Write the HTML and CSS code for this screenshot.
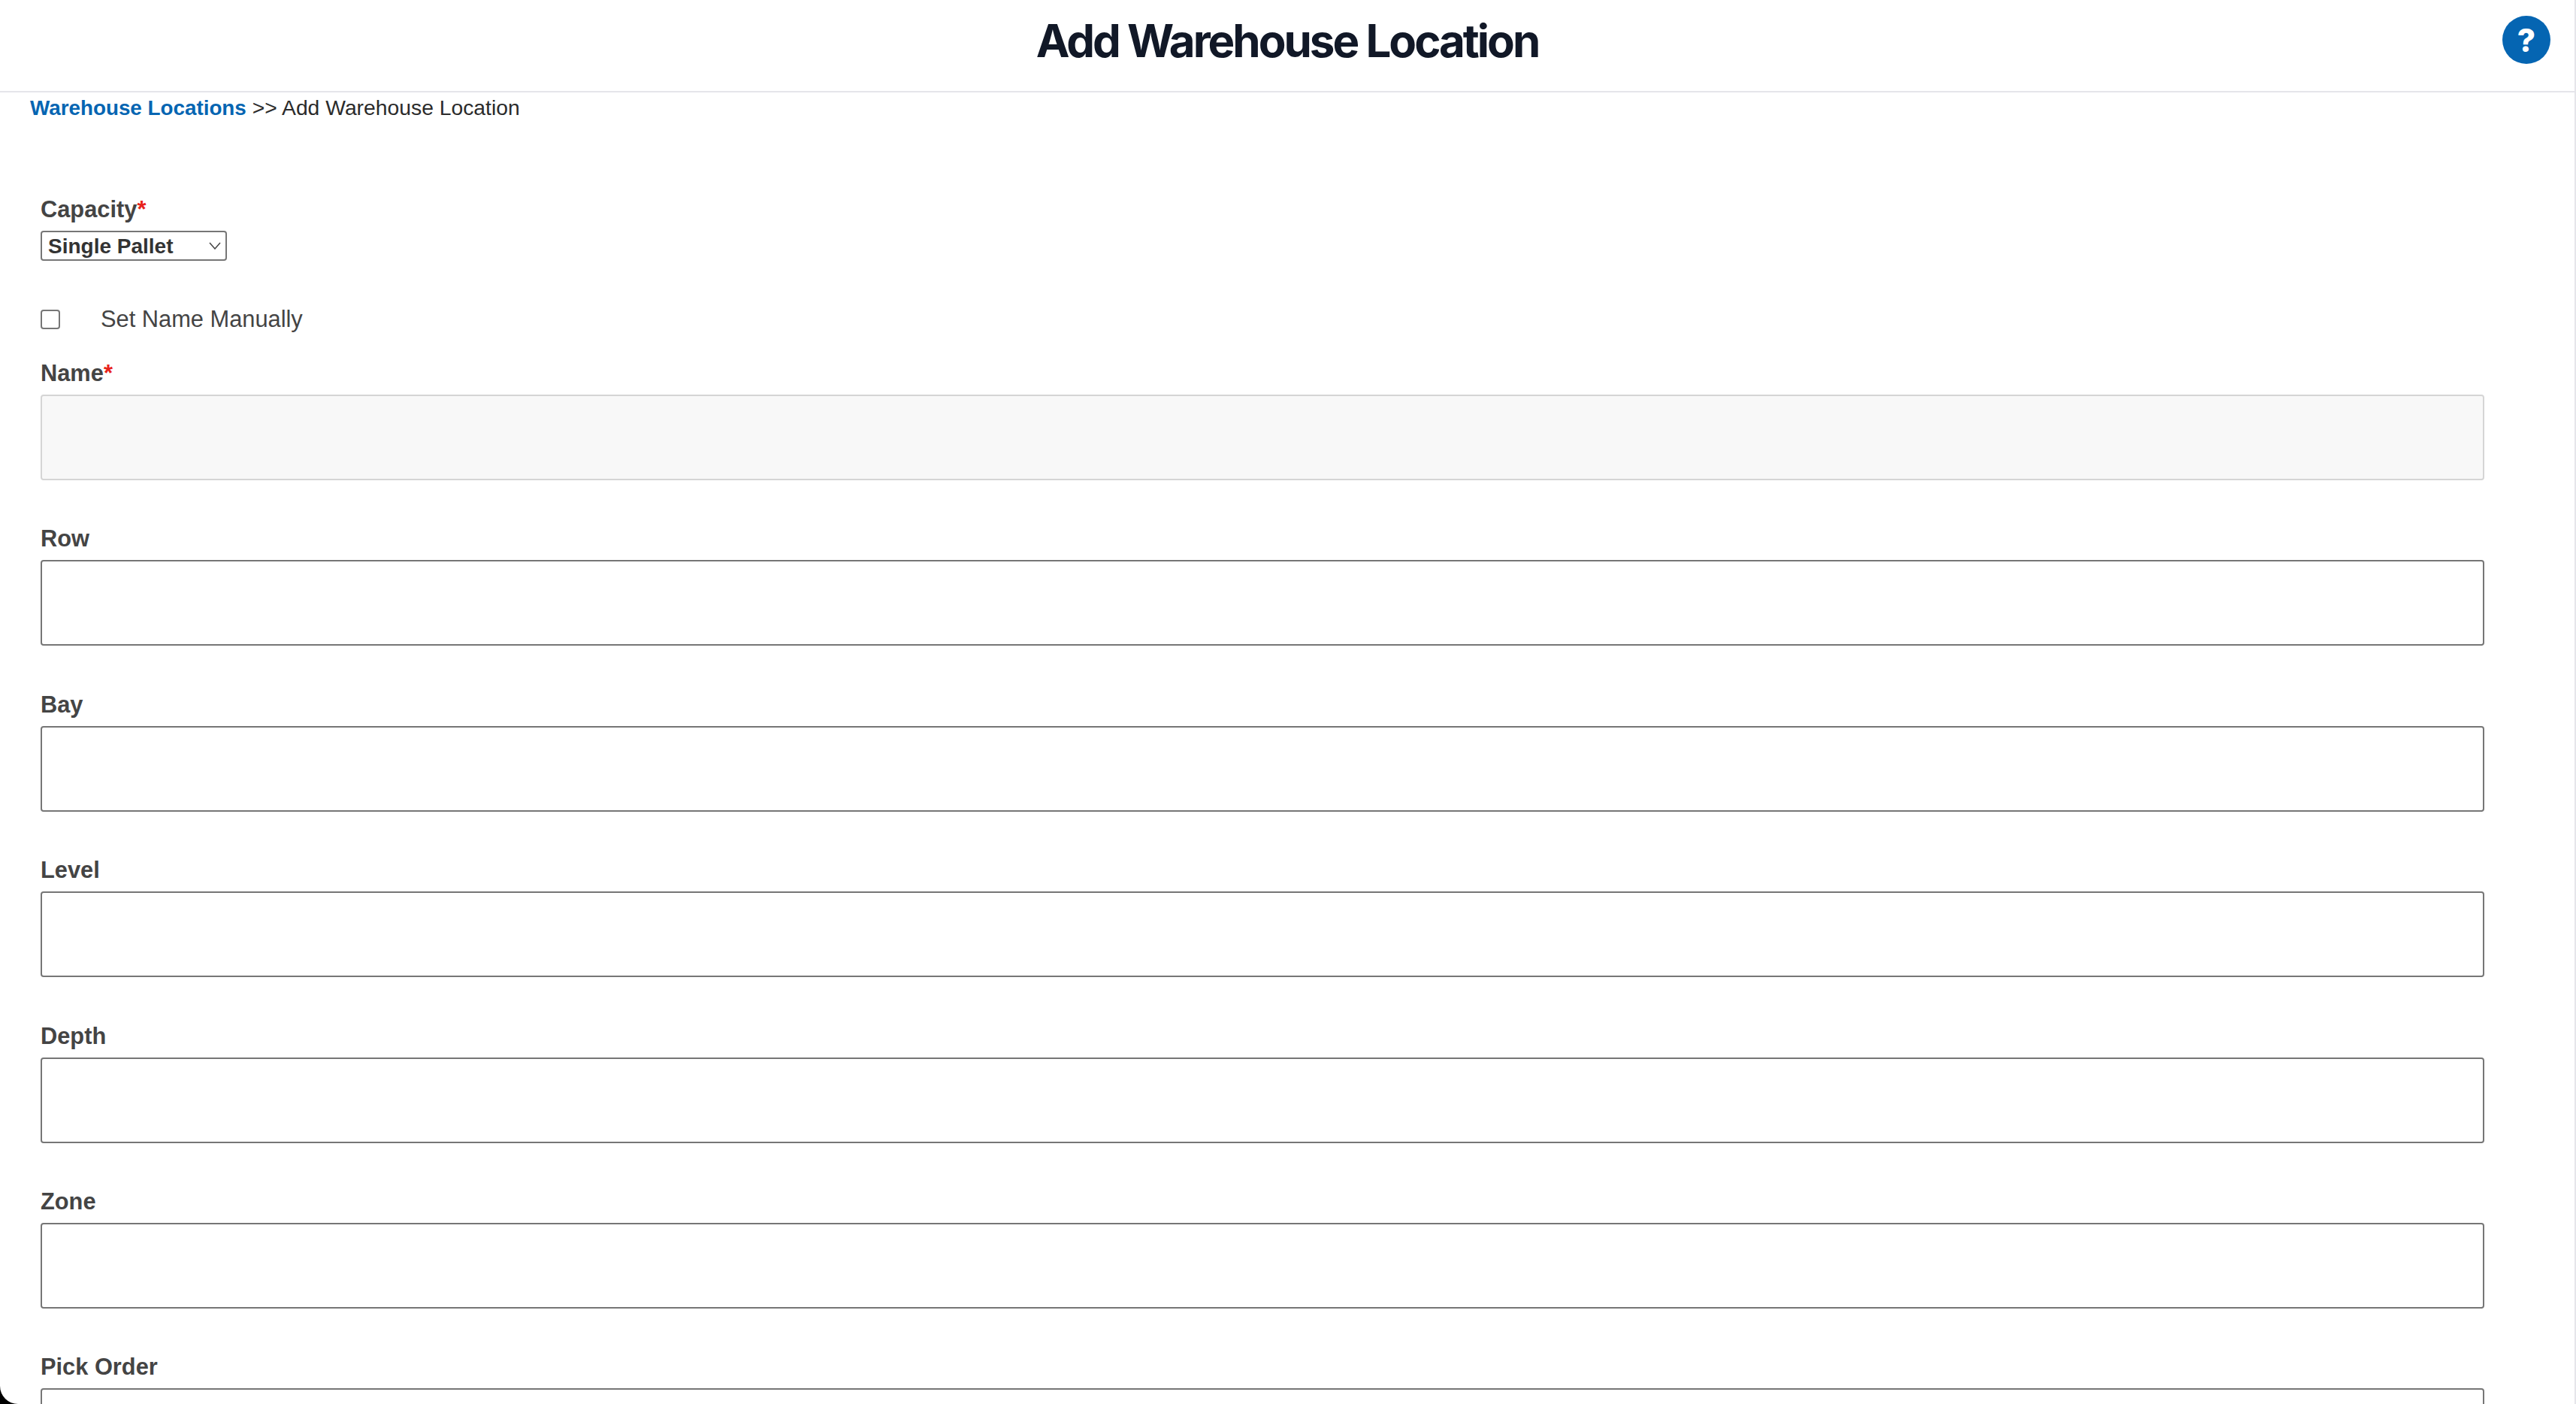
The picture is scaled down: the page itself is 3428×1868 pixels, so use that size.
FILE: index.html
```html
<!DOCTYPE html>
<html lang="en">
<head>
<meta charset="utf-8">
<title>Add Warehouse Location</title>
<link rel="stylesheet" href="styles.css">
</head>
<body>
<div class="page">
  <header class="topbar">
    <h1 class="title">Add Warehouse Location</h1>
    <button class="help" type="button" aria-label="Help">?</button>
  </header>
  <nav class="crumbs"><a class="crumb-link" href="#">Warehouse Locations</a> &gt;&gt; Add Warehouse Location</nav>
  <form class="form">
    <div class="capacity">
      <label class="label" for="capacity">Capacity<span class="req">*</span></label>
      <div class="select-wrap">
        <select class="select" id="capacity"><option>Single Pallet</option></select>
        <svg class="chevron" viewBox="0 0 16 10" aria-hidden="true"><path d="M1 1l7 8 7-8" fill="none" stroke="#444" stroke-width="1.5"/></svg>
      </div>
    </div>
    <label class="check-row"><input class="check" type="checkbox"><span>Set Name Manually</span></label>
    <div class="field name-field">
      <label class="label" for="name">Name<span class="req">*</span></label>
      <input class="input" id="name" type="text" disabled>
    </div>
    <div class="field"><label class="label" for="row">Row</label><input class="input" id="row" type="text"></div>
    <div class="field"><label class="label" for="bay">Bay</label><input class="input" id="bay" type="text"></div>
    <div class="field"><label class="label" for="level">Level</label><input class="input" id="level" type="text"></div>
    <div class="field"><label class="label" for="depth">Depth</label><input class="input" id="depth" type="text"></div>
    <div class="field"><label class="label" for="zone">Zone</label><input class="input" id="zone" type="text"></div>
    <div class="field"><label class="label" for="pick">Pick Order</label><input class="input" id="pick" type="text"></div>
  </form>
</div>
</body>
</html>
```

FILE: styles.css
```css
* { box-sizing: border-box; }
html, body { margin: 0; height: 100%; background: #000; overflow: hidden; }
.page {
  height: 100vh;
  overflow: hidden;
  background: #fff;
  border-right: 2px solid #e5e5ea;
  border-bottom-left-radius: 24px;
  font-family: "Liberation Sans", Arial, sans-serif;
  font-size: 30.8px;
  color: #333;
}
.topbar {
  position: relative;
  height: 123px;
  display: flex;
  align-items: center;
  justify-content: center;
  border-bottom: 2px solid #e5e5ea;
  padding-bottom: 14px;
}
.title {
  margin: 0;
  font-family: Inter, sans-serif;
  font-size: 60px;
  font-weight: 700;
  letter-spacing: -3px;
  color: #111827;
}
.help {
  position: absolute;
  top: 21px;
  right: 32px;
  width: 64px;
  height: 64px;
  padding: 0;
  border: 0;
  border-radius: 50%;
  background: #0565b2;
  color: #fff;
  font-family: Inter, sans-serif;
  font-size: 42px;
  font-weight: 800;
}
.crumbs { padding: 3px 0 0 40px; font-size: 28.3px; line-height: 34px; color: #2b2b2b; }
.crumb-link { color: #0565b2; font-size: 27.8px; font-weight: 700; text-decoration: none; }
.form { padding: 100px 54px 0; width: 3360px; }
.label { display: block; font-weight: 700; color: #444; line-height: 36px; }
.req { color: #e8231c; }
.select-wrap { position: relative; width: 248px; height: 40px; margin-top: 10px; }
.select {
  appearance: none;
  width: 100%;
  height: 100%;
  padding: 0 0 0 8px;
  border: 2px solid #767676;
  border-radius: 4px;
  background: #fff;
  font: 700 28px "Liberation Sans", Arial, sans-serif;
  color: #333;
}
.chevron { position: absolute; top: 15px; right: 8px; width: 16px; height: 10px; }
.check-row { display: flex; align-items: center; gap: 54px; height: 36px; margin-top: 60px; color: #444; }
.check {
  appearance: none;
  flex: none;
  width: 26px;
  height: 26px;
  margin: 0;
  border: 2px solid #767676;
  border-radius: 4px;
  background: #fff;
}
.field { height: 220.4px; }
.name-field { margin-top: 36px; }
.input {
  display: block;
  width: 100%;
  height: 114px;
  margin-top: 10px;
  border: 2px solid #767676;
  border-radius: 4px;
  background: #fff;
}
.input:disabled { background: #f8f8f8; border-color: #d5d5d5; }
```
